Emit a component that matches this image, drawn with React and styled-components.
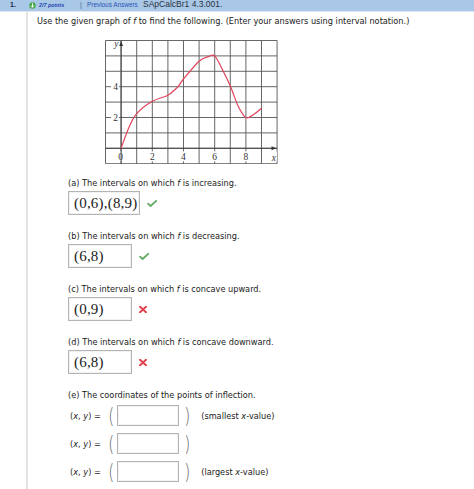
import React from 'react';
import styled, { createGlobalStyle } from 'styled-components';

const GlobalStyle = createGlobalStyle`
  html, body { margin: 0; padding: 0; background: #fff; }
  body { font-family: "DejaVu Sans", Verdana, sans-serif; color: #1a1a1a; }
`;

const Header = styled.div`
  height: 11px;
  background: #a9c7e6;
  overflow: hidden;
  border-bottom: 1px solid #dfe6ee;
`;

const HeaderInner = styled.div`
  display: flex;
  align-items: baseline;
  height: 11px;
  padding-left: 10px;
  font-family: "Liberation Sans", Arial, sans-serif;
  line-height: 9px;
  white-space: nowrap;
`;

const Num = styled.span`
  color: #1c2a48;
  font-weight: bold;
  font-size: 7px;
  width: 19px;
`;

const IconSlot = styled.span`
  align-self: center;
  margin-right: 3px;
`;

const Points = styled.span`
  color: #1f45b0;
  font-weight: bold;
  font-style: italic;
  font-size: 5.4px;
  width: 41px;
`;

const Sep = styled.span`
  color: #3f5f9a;
  font-size: 7px;
  width: 7px;
`;

const Prev = styled.span`
  color: #2a54b8;
  font-size: 6.4px;
  width: 56px;
`;

const Code = styled.span`
  color: #2b3240;
  font-size: 8.5px;
`;

const Body = styled.div`
  display: flex;
  min-height: 477px;
`;

const Gutter = styled.div`
  width: 26px;
  flex-shrink: 0;
  border-right: 2px solid #e4e4e4;
`;

const Content = styled.div`
  flex: 1;
  padding: 3px 0 0 9px;
`;

const Text = styled.div`
  font-size: 8.2px;
  line-height: 12px;
  white-space: nowrap;
`;

const Section = styled.div`
  margin-left: 31px;
  margin-top: 13px;
  display: flex;
  flex-direction: column;
`;

const GraphWrap = styled.div`
  margin-left: 37px;
  margin-bottom: 13px;
  svg { display: block; }
`;

const Part = styled.div`
  display: flex;
  flex-direction: column;
  gap: 2px;
  margin-bottom: 15px;
`;

const AnswerRow = styled.div`
  display: flex;
  align-items: center;
  gap: 7px;
`;

const AnswerBox = styled.div`
  width: ${p => p.$w}px;
  height: 24px;
  box-sizing: border-box;
  border: 1px solid #b4b4b4;
  box-shadow: inset 0 0 0 1px #f2f2f2;
  padding-left: 5px;
  display: flex;
  align-items: center;
  font-family: "Liberation Serif", "Times New Roman", serif;
  font-size: 15px;
  color: #222;
  letter-spacing: 0.2px;
`;

const CoordRows = styled.div`
  display: flex;
  flex-direction: column;
  gap: 7px;
  margin-top: 2px;
  padding-left: 2px;
`;

const CoordRow = styled.div`
  display: flex;
  align-items: center;
  height: 21px;
`;

const Eq = styled.span`
  font-size: 8.2px;
  width: 37px;
  white-space: nowrap;
`;

const Paren = styled.span`
  font-family: "DejaVu Sans", sans-serif;
  font-weight: 200;
  font-size: 22px;
  line-height: 21px;
  color: #666;
  transform: scaleX(0.7);
  margin: 0 ${p => p.$r ? 10 : 1}px 0 ${p => p.$r ? 4 : 0}px;
`;

const CoordInput = styled.div`
  width: 62px;
  height: 21px;
  box-sizing: border-box;
  border: 1px solid #b4b4b4;
  box-shadow: inset 0 0 0 1px #f2f2f2;
`;

const Note = styled.span`
  font-size: 8.2px;
  white-space: nowrap;
`;

const Check = () => (
  <svg width="10" height="7" viewBox="0 0 10 7">
    <polyline points="1,3.6 3.6,6 9.2,0.8" fill="none" stroke="#62ab64" strokeWidth="1.8" strokeLinejoin="round" strokeLinecap="round" />
  </svg>
);

const Cross = () => (
  <svg width="8" height="7" viewBox="0 0 8 7">
    <path d="M1,0.8 L7,6.2 M7,0.8 L1,6.2" stroke="#e0434d" strokeWidth="2" strokeLinecap="round" />
  </svg>
);

const PtsIcon = () => (
  <svg width="7" height="7" viewBox="0 0 8 8" style={{ display: 'block' }}>
    <circle cx="4" cy="4" r="3.7" fill="#4aa84e" />
    <path d="M4,1.5 V6 M2.4,4.4 L4,6 L5.6,4.4" stroke="#fff" strokeWidth="1.1" fill="none" />
  </svg>
);

const UX = 15.6;
const UY = 15.4;
const gx = x => (x + 1) * UX;
const gy = y => (7 - y) * UY;

const pts = [
  [0, 0], [0.5, 1.35], [1, 2.25], [2, 3.05], [3, 3.45], [3.6, 3.95], [4, 4.5],
  [5, 5.65], [5.6, 5.95], [6, 6], [6.5, 5.1], [7, 4.05], [7.5, 2.75],
  [8, 2], [8.5, 2.2], [9, 2.6],
];

function curvePath() {
  const p = pts.map(([x, y]) => [gx(x), gy(y)]);
  let d = `M${p[0][0].toFixed(2)},${p[0][1].toFixed(2)}`;
  for (let i = 0; i < p.length - 1; i++) {
    const p0 = p[i - 1] || p[i];
    const p1 = p[i];
    const p2 = p[i + 1];
    const p3 = p[i + 2] || p2;
    const c1 = [p1[0] + (p2[0] - p0[0]) / 6, p1[1] + (p2[1] - p0[1]) / 6];
    const c2 = [p2[0] - (p3[0] - p1[0]) / 6, p2[1] - (p3[1] - p1[1]) / 6];
    d += ` C${c1[0].toFixed(2)},${c1[1].toFixed(2)} ${c2[0].toFixed(2)},${c2[1].toFixed(2)} ${p2[0].toFixed(2)},${p2[1].toFixed(2)}`;
  }
  return d;
}

const Graph = () => {
  const W = 11 * UX;
  const H = 8 * UY;
  const vlines = [];
  for (let i = 0; i <= 11; i++) vlines.push(i * UX);
  const hlines = [];
  for (let j = 0; j <= 8; j++) hlines.push(j * UY);
  const labelStyle = { fontFamily: '"Liberation Serif", "Times New Roman", serif', fontSize: 9.5, fill: '#333' };
  const bottomLabels = [[0, '0'], [2, '2'], [4, '4'], [6, '6'], [8, '8']];
  return (
    <svg width={W + 1} height={H + 1} viewBox={`-0.5 -0.5 ${W + 1} ${H + 1}`}>
      <rect x="0" y="0" width={W} height={H} fill="#fff" />
      {vlines.map((x, i) => (
        <line key={'v' + i} x1={x} y1="0" x2={x} y2={H} stroke="#555" strokeWidth="0.9" />
      ))}
      {hlines.map((y, i) => (
        <line key={'h' + i} x1="0" y1={y} x2={W} y2={y} stroke="#555" strokeWidth="0.9" />
      ))}
      {bottomLabels.map(([v, t]) => (
        <g key={'b' + t}>
          <rect x={gx(v) - 3.5} y={gy(-0.2)} width="7" height="10" fill="#fff" />
          <text x={gx(v) + (v === 0 ? -0.5 : 0)} y={gy(-0.75)} textAnchor="middle" style={labelStyle}>{t}</text>
        </g>
      ))}
      {[[4, '4'], [2, '2']].map(([v, t]) => (
        <g key={'l' + t}>
          <rect x={gx(-0.65)} y={gy(v) - 5} width="8" height="10" fill="#fff" />
          <text x={gx(-0.35)} y={gy(v) + 3.4} textAnchor="middle" style={labelStyle}>{t}</text>
        </g>
      ))}
      <rect x={gx(-0.62)} y={gy(7) + 1} width="8" height="9" fill="#fff" />
      <text x={gx(-0.3)} y={gy(6.55)} textAnchor="middle" style={{ ...labelStyle, fontStyle: 'italic' }}>y</text>
      <rect x={gx(9.6)} y={gy(-0.2)} width="6" height="10" fill="#fff" />
      <text x={gx(9.8)} y={gy(-0.8)} textAnchor="middle" style={{ ...labelStyle, fontStyle: 'italic' }}>x</text>
      <line x1={gx(0)} y1={gy(-1)} x2={gx(0)} y2={gy(7)} stroke="#444" strokeWidth="1" />
      <line x1={gx(-1)} y1={gy(0)} x2={gx(10)} y2={gy(0)} stroke="#444" strokeWidth="1" />
      <path d={`M${gx(0)},${gy(7) + 1} l-2,4.5 l4,0 z`} fill="#333" />
      <path d={`M${gx(10) - 1},${gy(0)} l-4.5,-2 l0,4 z`} fill="#333" />
      <path d={curvePath()} fill="none" stroke="#e0435a" strokeWidth="1.2" />
    </svg>
  );
};

const I = styled.i`
  font-style: italic;
`;

const Label = ({ letter, text }) => (
  <Text>({letter}) The intervals on which <I>f</I> is {text}.</Text>
);

const answers = [
  { letter: 'a', text: 'increasing', value: '(0,6),(8,9)', w: 72, ok: true },
  { letter: 'b', text: 'decreasing', value: '(6,8)', w: 64, ok: true },
  { letter: 'c', text: 'concave upward', value: '(0,9)', w: 64, ok: false },
  { letter: 'd', text: 'concave downward', value: '(6,8)', w: 64, ok: false },
];

const coords = ['(smallest ', '', '(largest '];

export default function App() {
  return (
    <>
      <GlobalStyle />
      <Header>
        <HeaderInner>
          <Num>1.</Num>
          <IconSlot><PtsIcon /></IconSlot>
          <Points>2/7 points</Points>
          <Sep>|</Sep>
          <Prev>Previous Answers</Prev>
          <Code>SApCalcBr1 4.3.001.</Code>
        </HeaderInner>
      </Header>
      <Body>
        <Gutter />
        <Content>
          <Text>Use the given graph of <I>f</I> to find the following. (Enter your answers using interval notation.)</Text>
          <Section>
            <GraphWrap>
              <Graph />
            </GraphWrap>
            {answers.map(a => (
              <Part key={a.letter}>
                <Label letter={a.letter} text={a.text} />
                <AnswerRow>
                  <AnswerBox $w={a.w}>{a.value}</AnswerBox>
                  {a.ok ? <Check /> : <Cross />}
                </AnswerRow>
              </Part>
            ))}
            <Part>
              <Text>(e) The coordinates of the points of inflection.</Text>
              <CoordRows>
                {coords.map((c, i) => (
                  <CoordRow key={i}>
                    <Eq>(<I>x</I>, <I>y</I>) =</Eq>
                    <Paren>(</Paren>
                    <CoordInput />
                    <Paren $r>)</Paren>
                    {c && <Note>{c}<I>x</I>-value)</Note>}
                  </CoordRow>
                ))}
              </CoordRows>
            </Part>
          </Section>
        </Content>
      </Body>
    </>
  );
}
